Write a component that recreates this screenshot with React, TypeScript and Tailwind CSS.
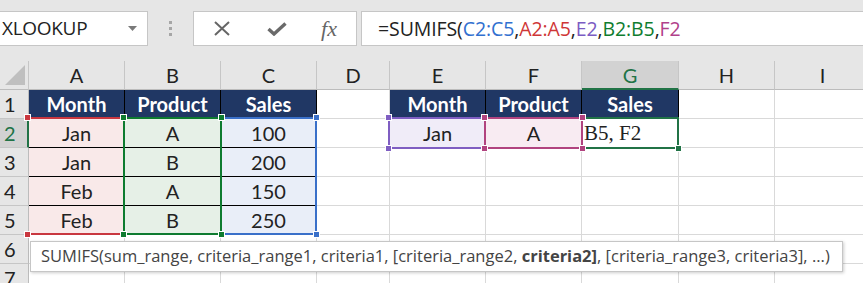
import React from 'react';

const COLS = ['A', 'B', 'C', 'D', 'E', 'F', 'G', 'H', 'I'];

const DATA: string[][] = [
  ['Month', 'Product', 'Sales', '', 'Month', 'Product', 'Sales', '', ''],
  ['Jan', 'A', '100', '', 'Jan', 'A', 'B5, F2', '', ''],
  ['Jan', 'B', '200', '', '', '', '', '', ''],
  ['Feb', 'A', '150', '', '', '', '', '', ''],
  ['Feb', 'B', '250', '', '', '', '', '', ''],
  ['', '', '', '', '', '', '', '', ''],
  ['', '', '', '', '', '', '', '', ''],
];

const BASE = 'flex items-center border-r border-b overflow-hidden whitespace-nowrap';

function cellClass(r: number, c: number): string {
  if (r === 1 && c !== 3 && c < 7) {
    return 'justify-center bg-[#203764] text-white font-bold border-r-black border-b-[#203764]';
  }
  if (r >= 2 && r <= 5) {
    if (c === 0) return 'justify-center bg-[#f9e9e9] border-r-[#d9d9d9] border-b-black';
    if (c === 1) return 'justify-center bg-[#e6f0e7] border-r-[#d9d9d9] border-b-black';
    if (c === 2) return 'justify-center bg-[#e9eef8] border-r-[#d9d9d9] border-b-black';
  }
  if (r === 2) {
    if (c === 4) return 'justify-center bg-[#f0ecf8] border-[#d9d9d9]';
    if (c === 5) return 'justify-center bg-[#f8ebf2] border-[#d9d9d9]';
    if (c === 6) return "justify-start pl-[2px] bg-white border-[#d9d9d9] font-['Liberation_Serif',serif] text-[21px]";
  }
  return 'justify-center bg-white border-[#d9d9d9]';
}

type Corners = { tl?: boolean; tr?: boolean; bl?: boolean; br?: boolean };

function RangeBox({ box, color, handle, corners }: { box: string; color: string; handle: string; corners: Corners }) {
  return (
    <div className={`absolute border-2 ${box} ${color}`}>
      {corners.tl && <div className={`absolute -left-[5px] -top-[5px] w-[7px] h-[7px] border border-white ${handle}`} />}
      {corners.tr && <div className={`absolute -right-[5px] -top-[5px] w-[7px] h-[7px] border border-white ${handle}`} />}
      {corners.bl && <div className={`absolute -left-[5px] -bottom-[5px] w-[7px] h-[7px] border border-white ${handle}`} />}
      {corners.br && <div className={`absolute -right-[5px] -bottom-[5px] w-[7px] h-[7px] border border-white ${handle}`} />}
    </div>
  );
}

export default function App() {
  return (
    <div className="w-[863px] h-[283px] overflow-hidden bg-white relative text-[#222] font-['Lato',sans-serif]">
      {/* formula bar */}
      <div className="h-[61px] bg-[#e6e6e6] flex items-start pt-[11px] font-['Open_Sans',sans-serif]">
        <div className="w-[148px] h-[35px] bg-white border border-l-0 border-[#c6c6c6] flex items-center justify-between pl-[2px] pr-[10px]">
          <span className="text-[19px] text-[#222] tracking-[-0.3px]">XLOOKUP</span>
          <svg width="9" height="5" viewBox="0 0 9 5">
            <path d="M0 0 L9 0 L4.5 5 Z" fill="#7a7a7a" />
          </svg>
        </div>
        <div className="w-[45px] h-[35px] flex flex-col items-center justify-center gap-[3px]">
          <div className="w-[3px] h-[3px] bg-[#a6a6a6]" />
          <div className="w-[3px] h-[3px] bg-[#a6a6a6]" />
          <div className="w-[3px] h-[3px] bg-[#a6a6a6]" />
        </div>
        <div className="w-[164px] h-[35px] bg-white border border-[#c6c6c6] flex items-center">
          <div className="w-[55px] flex justify-center">
            <svg width="18" height="15" viewBox="0 0 18 15">
              <path d="M2 1 L16 14 M16 1 L2 14" stroke="#666" strokeWidth="2" fill="none" />
            </svg>
          </div>
          <div className="w-[55px] flex justify-center">
            <svg width="20" height="14" viewBox="0 0 20 14">
              <path d="M1.5 7 L7 12 L18.5 1.5" stroke="#6a6a6a" strokeWidth="3.4" fill="none" />
            </svg>
          </div>
          <div className="w-[50px] flex justify-center">
            <span className="font-['Liberation_Serif',serif] italic text-[22px] text-[#666] leading-none">fx</span>
          </div>
        </div>
        <div className="ml-[4px] flex-1 h-[35px] bg-white border border-r-0 border-[#c6c6c6] flex items-center pl-[16px]">
          <span className="text-[19.5px] tracking-[-0.1px] text-[#222]">
            =SUMIFS(
            <span className="text-[#3170d0]">C2:C5</span>,
            <span className="text-[#cf3636]">A2:A5</span>,
            <span className="text-[#7b5cc3]">E2</span>,
            <span className="text-[#0f7d2f]">B2:B5</span>,
            <span className="text-[#b1418a]">F2</span>
          </span>
        </div>
      </div>

      {/* grid */}
      <div className="relative grid grid-cols-[29px_96px_96px_96px_73px_96px_96px_97px_96px_96px] grid-rows-[29px_29px_29px_29px_29px_29px_29px_29px] text-[20px] leading-none">
        <div className="relative bg-[#e6e6e6] border-r border-b border-r-[#c6c6c6] border-b-[#bcbcbc]">
          <svg className="absolute right-[3px] bottom-[4px]" width="20" height="20" viewBox="0 0 20 20">
            <path d="M20 0 L20 20 L0 20 Z" fill="#bfbfbf" />
          </svg>
        </div>
        {COLS.map((l) =>
          l === 'G' ? (
            <div key={l} className="flex items-center justify-center bg-[#d2d2d2] border-r border-r-[#c6c6c6] border-b-2 border-b-[#217346] text-[#217346]">
              {l}
            </div>
          ) : (
            <div key={l} className="flex items-center justify-center bg-[#e6e6e6] border-r border-b border-r-[#c6c6c6] border-b-[#bcbcbc]">
              {l}
            </div>
          )
        )}
        {DATA.map((row, ri) => {
          const r = ri + 1;
          return (
            <React.Fragment key={r}>
              {r === 2 ? (
                <div className="flex items-center pl-[4px] bg-[#d2d2d2] border-r-2 border-r-[#217346] border-b border-b-[#c6c6c6] text-[#217346]">
                  {r}
                </div>
              ) : (
                <div className="flex items-center pl-[4px] bg-[#e6e6e6] border-r border-b border-r-[#bcbcbc] border-b-[#c6c6c6]">
                  {r}
                </div>
              )}
              {row.map((t, ci) => (
                <div key={ci} className={`${BASE} ${cellClass(r, ci)}`}>
                  {t}
                </div>
              ))}
            </React.Fragment>
          );
        })}

        {/* range highlights (overlays on the cells) */}
        <RangeBox box="left-[29px] top-[56px] w-[96px] h-[118px] border-l-0" color="border-[#c9373f]" handle="bg-[#c9373f]" corners={{ tl: true, bl: true }} />
        <RangeBox box="left-[220px] top-[56px] w-[97px] h-[118px]" color="border-[#3a70c9]" handle="bg-[#3a70c9]" corners={{ tr: true, br: true }} />
        <RangeBox box="left-[123px] top-[56px] w-[99px] h-[118px]" color="border-[#0e7b30]" handle="bg-[#0e7b30]" corners={{ tl: true, tr: true, bl: true, br: true }} />
        <RangeBox box="left-[388px] top-[56px] w-[98px] h-[32px]" color="border-[#7f5ec2]" handle="bg-[#7f5ec2]" corners={{ tl: true, bl: true }} />
        <RangeBox box="left-[581px] top-[56px] w-[98px] h-[32px]" color="border-[#217346]" handle="bg-[#217346]" corners={{ br: true }} />
        <RangeBox box="left-[484px] top-[56px] w-[99px] h-[32px]" color="border-[#b1437f]" handle="bg-[#b1437f]" corners={{ tl: true, tr: true, bl: true, br: true }} />

        {/* tooltip */}
        <div className="absolute left-[30px] top-[180px] w-[813px] h-[31px] bg-white border border-[#c6c6c6] shadow-[1px_1px_3px_rgba(0,0,0,0.2)] flex items-center pl-[10px] font-['Open_Sans',sans-serif] text-[16.5px] text-[#444] whitespace-nowrap">
          SUMIFS(sum_range, criteria_range1, criteria1, [criteria_range2,&nbsp;<b className="font-bold">criteria2]</b>, [criteria_range3, criteria3], ...)
        </div>
      </div>
    </div>
  );
}
